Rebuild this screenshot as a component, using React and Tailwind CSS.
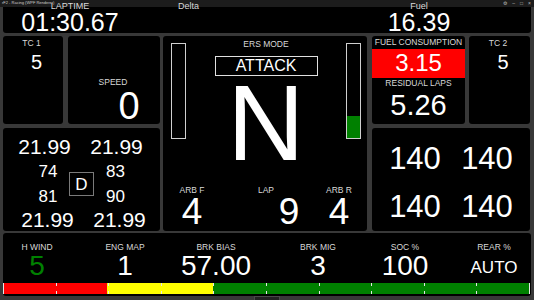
const label = "text-[8.5px] leading-none text-[#d9d9d9] whitespace-nowrap";

function TcCell({ name, width }) {
  return (
    <div className={`${width} bg-black rounded-[3px] pt-[3px] flex flex-col items-center`}>
      <div className={`${label} pr-[3px]`}>{name}</div>
      <div className="mt-[4px] text-[20px] leading-none text-white pl-[7px]">5</div>
    </div>
  );
}

function Ticks() {
  const ticks = Array.from({ length: 11 }, (_, i) => i);
  return (
    <div className="absolute inset-0 flex justify-between">
      {ticks.map((i) =>
        i === 0 || i === 10 ? (
          <div key={i} className="w-px bg-[#e6e6e6]" />
        ) : (
          <div key={i} className="w-px flex flex-col justify-between">
            <div className="h-[3px] bg-[#e6e6e6]" />
            <div className="h-[3px] bg-[#e6e6e6]" />
          </div>
        )
      )}
    </div>
  );
}

const bottomCols = [
  { name: "H WIND", value: "5", box: "ml-[4px]", txt: "text-[28px] text-[#008000]" },
  { name: "ENG MAP", value: "1", box: "ml-[28px]", txt: "text-[28px] text-white" },
  { name: "BRK BIAS", value: "57.00", box: "ml-[31px]", txt: "text-[28px] text-white" },
  { name: "BRK MIG", value: "3", box: "ml-[42px]", txt: "text-[28px] text-white" },
  { name: "SOC %", value: "100", box: "ml-[27px]", txt: "text-[28px] text-white" },
  { name: "REAR %", value: "AUTO", box: "ml-[29px]", txt: "text-[17px] text-white mt-[3px]" },
];

export default function App() {
  return (
    <div className="relative w-[534px] h-[300px] overflow-hidden bg-[linear-gradient(#1c1c1c_7px,#383838_7px)] font-['Liberation_Sans',Arial,sans-serif] text-white">
      {/* window title + controls */}
      <div className="absolute left-[2px] top-[1px] z-10 text-[4px] leading-none text-[#cfcfcf] whitespace-nowrap">rF2 - Racing (WPF Renderer)</div>
      <div className="absolute right-[3px] top-[0px] z-10 flex gap-[5px] text-[5px] leading-[6px] text-[#bdbdbd]">
        <span>⚙</span><span>–</span><span>□</span><span>×</span>
      </div>

      {/* top strip */}
      <div className="mx-[3px] h-[33px] rounded-b-[3px] bg-[linear-gradient(#1c1c1c_7px,#000_7px)] grid grid-cols-[134px_170px_1fr]">
        <div className="flex flex-col items-center">
          <div className="pt-[2px] text-[9px] leading-[9px] text-[#d9d9d9]">LAPTIME</div>
          <div className="text-[25px] leading-[22px]">01:30.67</div>
        </div>
        <div className="pl-[41px]">
          <div className="pt-[2px] text-[9px] leading-[9px] text-[#d9d9d9]">Delta</div>
        </div>
        <div className="flex flex-col items-center">
          <div className="pt-[2px] text-[9px] leading-[9px] text-[#d9d9d9]">Fuel</div>
          <div className="text-[25px] leading-[22px]">16.39</div>
        </div>
      </div>

      {/* middle */}
      <div className="mt-[3px] ml-[3px] flex h-[195px]">
        {/* left column */}
        <div className="w-[157px] flex flex-col gap-[4px]">
          <div className="h-[88px] flex gap-[5px]">
            <TcCell name="TC 1" width="w-[60px]" />
            <div className="flex-1 bg-black rounded-[3px] pt-[42px] flex flex-col items-center">
              <div className={`${label} pr-[2px]`}>SPEED</div>
              <div className="text-[38px] leading-none pl-[30px]">0</div>
            </div>
          </div>
          <div className="h-[103px] bg-black rounded-[3px] pt-[8px] flex flex-col">
            <div className="flex pl-[5.5px] text-[21px] leading-none">
              <div className="w-[72px] text-center">21.99</div>
              <div className="w-[72px] text-center">21.99</div>
            </div>
            <div className="mt-[2px] flex items-center pl-[24px] text-[17px]">
              <div className="w-[42px] flex flex-col items-center leading-[25px]">
                <span>74</span><span>81</span>
              </div>
              <div className="w-[25px] h-[24px] border border-[#7a7a7a] flex items-center justify-center leading-none">D</div>
              <div className="w-[43px] flex flex-col items-center leading-[25px]">
                <span>83</span><span>90</span>
              </div>
            </div>
            <div className="flex pl-[8.5px] text-[21px] leading-none">
              <div className="w-[72px] text-center">21.99</div>
              <div className="w-[72px] text-center">21.99</div>
            </div>
          </div>
        </div>

        {/* centre panel */}
        <div className="ml-[3px] w-[204px] bg-black rounded-[3px] flex flex-col">
          <div className="flex items-start pt-[4px] pl-[8px] pr-[6px]">
            <div className="mt-[3px] w-[15px] h-[96px] border border-[#d0d0d0]" />
            <div className="w-[160px] flex flex-col items-center">
              <div className={label}>ERS MODE</div>
              <div className="mt-[7.5px] w-[103px] h-[20px] border border-[#e0e0e0] text-[16px] leading-[18px] text-center">ATTACK</div>
              <div className="mt-[7px] text-[107px] leading-[80px]">N</div>
            </div>
            <div className="mt-[3px] w-[15px] h-[96px] border border-[#d0d0d0] flex flex-col justify-end">
              <div className="h-[22px] bg-[#008000]" />
            </div>
          </div>
          <div className="mt-auto pb-[1px] flex">
            <div className="w-[58px] flex flex-col items-center">
              <div className={label}>ARB F</div>
              <div className="-mt-[1px] text-[37px] leading-none">4</div>
            </div>
            <div className="flex-1 flex flex-col items-center">
              <div className={label}>LAP</div>
              <div className="-mt-[1px] text-[37px] leading-none pl-[46px]">9</div>
            </div>
            <div className="w-[56px] flex flex-col items-center">
              <div className={label}>ARB R</div>
              <div className="-mt-[1px] text-[37px] leading-none">4</div>
            </div>
          </div>
        </div>

        {/* right column */}
        <div className="ml-[5px] w-[158px] flex flex-col gap-[4px]">
          <div className="h-[88px] flex gap-[4px]">
            <div className="w-[93px] bg-black rounded-[3px] pt-[2px] flex flex-col">
              <div className={`${label} text-center text-[8.4px]`}>FUEL CONSUMPTION</div>
              <div className="mt-[2px] h-[29px] bg-[#ff0000] flex items-center justify-center text-[24px] leading-none">3.15</div>
              <div className={`${label} mt-[1px] text-center`}>RESIDUAL LAPS</div>
              <div className="mt-[4px] text-[29px] leading-none text-center">5.26</div>
            </div>
            <TcCell name="TC 2" width="w-[61px]" />
          </div>
          <div className="h-[103px] bg-black rounded-[3px] pt-[15px] flex flex-col gap-[17px] text-[31px] leading-none">
            <div className="flex pl-[7px]">
              <div className="w-[72px] text-center">140</div>
              <div className="w-[72px] text-center">140</div>
            </div>
            <div className="flex pl-[7px]">
              <div className="w-[72px] text-center">140</div>
              <div className="w-[72px] text-center">140</div>
            </div>
          </div>
        </div>
      </div>

      {/* bottom panel */}
      <div className="mt-[2px] mx-[3px] h-[63px] bg-black rounded-[3px] pt-[10px] flex flex-col">
        <div className="flex">
          {bottomCols.map((c) => (
            <div key={c.name} className={`${c.box} w-[60px] flex flex-col items-center`}>
              <div className={label}>{c.name}</div>
              <div className="h-[28px] flex items-center justify-center">
                <span className={`${c.txt} leading-none whitespace-nowrap`}>{c.value}</span>
              </div>
            </div>
          ))}
        </div>
        <div className="relative mt-[3px] w-[527px] h-[11px] flex">
          <div className="w-[104px] bg-[#ff0000]" />
          <div className="w-[106px] bg-[#ffff00]" />
          <div className="flex-1 bg-[#008000]" />
          <Ticks />
        </div>
      </div>
      <div className="flex justify-center">
        <div className="w-[26px] h-[4px] bg-[#222] border-t border-x border-[#4a4a4a]" />
      </div>
    </div>
  );
}
